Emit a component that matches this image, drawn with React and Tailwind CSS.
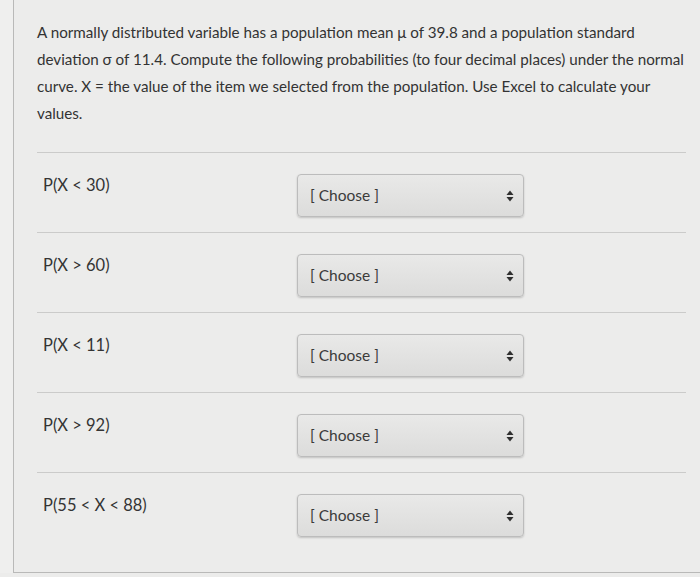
const rows = [
  { label: "P(X < 30)" },
  { label: "P(X > 60)" },
  { label: "P(X < 11)" },
  { label: "P(X > 92)" },
  { label: "P(55 < X < 88)" },
];

function ChooseSelect() {
  return (
    <div className="w-[227px] h-[43px] rounded-[4px] border border-[#bcbcbc] bg-gradient-to-b from-[#e9e9e8] to-[#dcdcdb] shadow-[0_1px_2px_rgba(0,0,0,0.18)] flex items-center justify-between pl-[12px] pr-[9px]">
      <span className="text-[15.5px] text-[#3b3b3b]">[ Choose ]</span>
      <svg width="8" height="12" viewBox="0 0 8 12" className="text-[#2f2f2f]">
        <path d="M4 0.5 L7.5 5 L0.5 5 Z" fill="currentColor" />
        <path d="M4 11.5 L7.5 7 L0.5 7 Z" fill="currentColor" />
      </svg>
    </div>
  );
}

export default function App() {
  return (
    <div className="w-[700px] h-[577px] bg-[#ececeb] flex font-['Lato','Liberation_Sans',sans-serif]">
      <div className="w-[13px] h-[573px] bg-[#efefee]" />
      <div className="flex-1 h-[573px] border-l border-b border-[#b9b9b8] pl-[23px] pr-[14px]">
        <p className="pt-[19px] text-[15.2px] leading-[27px] text-[#333333]">
          <span className="block whitespace-nowrap">A normally distributed variable has a population mean μ of 39.8 and a population standard</span>
          <span className="block whitespace-nowrap">deviation σ of 11.4. Compute the following probabilities (to four decimal places) under the normal</span>
          <span className="block whitespace-nowrap">curve. X = the value of the item we selected from the population. Use Excel to calculate your</span>
          <span className="block whitespace-nowrap">values.</span>
        </p>
        <div className="mt-[25px]">
          {rows.map((row) => (
            <div key={row.label} className="h-[80px] border-t border-[#cbcbca] flex pl-[6px]">
              <div className="w-[254px] pt-[23px] text-[16.5px] leading-[18px] text-[#343434]">{row.label}</div>
              <div className="pt-[21px]">
                <ChooseSelect />
              </div>
            </div>
          ))}
        </div>
      </div>
    </div>
  );
}
